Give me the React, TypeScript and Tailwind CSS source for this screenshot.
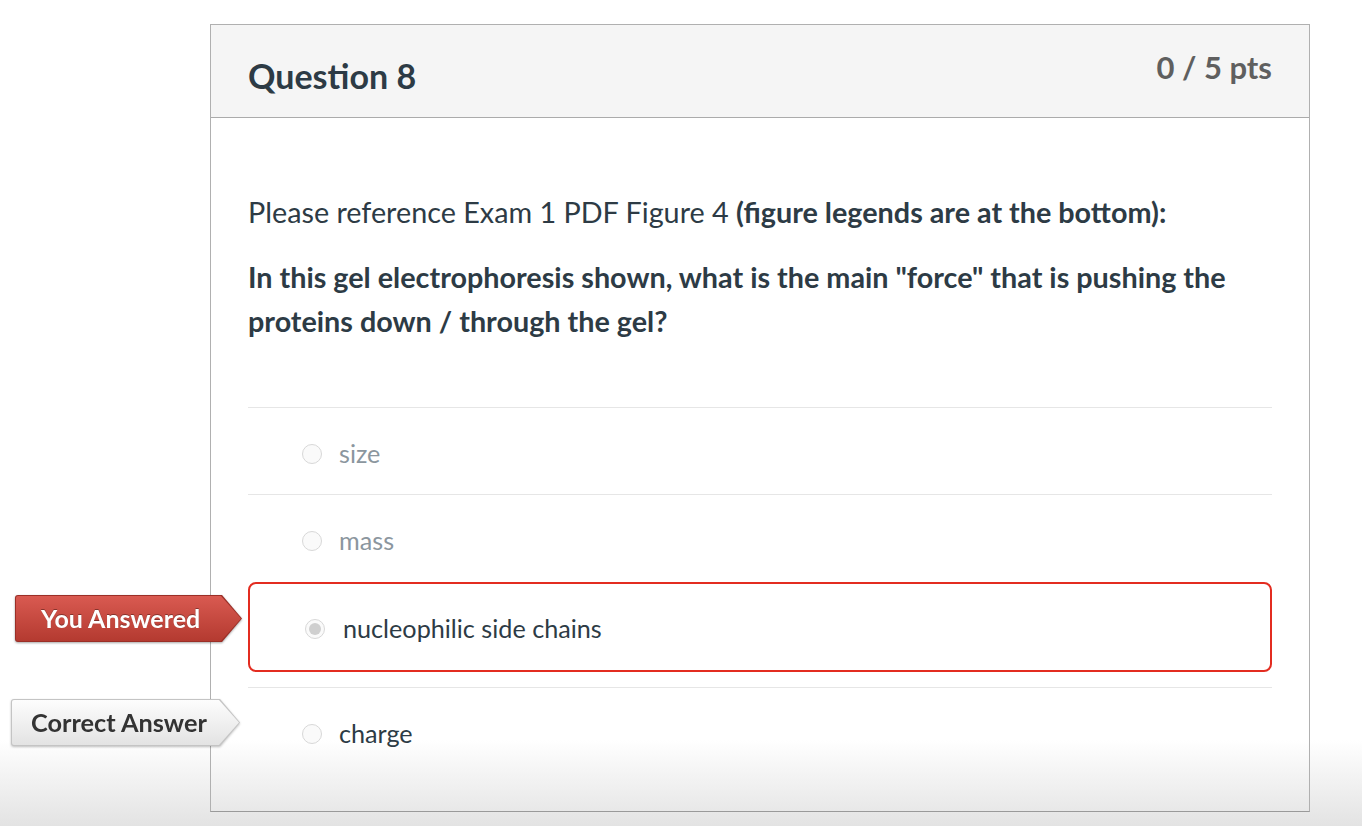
import type { ReactNode } from 'react';

const answers = [
  { id: 'a1', text: 'size' },
  { id: 'a2', text: 'mass' },
];

function Tag({ tone, children }: { tone: 'red' | 'gray'; children: ReactNode }) {
  const clip = '[clip-path:polygon(0_0,calc(100%-20px)_0,100%_50%,calc(100%-20px)_100%,0_100%)]';
  if (tone === 'red') {
    return (
      <div className="h-full w-full [filter:drop-shadow(0_1px_1px_rgba(0,0,0,0.35))]">
        <div className={`${clip} h-full w-full rounded-l-[3px] bg-[#9b2f27] p-px`}>
          <div className={`${clip} flex h-full w-full items-center rounded-l-[2px] bg-[linear-gradient(to_bottom,#d95a51,#b43a30)] pl-[25px] text-[25px] font-bold text-white [text-shadow:0_-1px_0_rgba(0,0,0,0.35)]`}>
            {children}
          </div>
        </div>
      </div>
    );
  }
  return (
    <div className="h-full w-full [filter:drop-shadow(0_1px_1px_rgba(0,0,0,0.25))]">
      <div className={`${clip} h-full w-full rounded-l-[3px] bg-[#c4c4c4] p-px`}>
        <div className={`${clip} flex h-full w-full items-center rounded-l-[2px] bg-[linear-gradient(to_bottom,#fdfdfd,#e3e3e3)] pl-[19px] text-[25.3px] font-bold text-[#333333]`}>
          {children}
        </div>
      </div>
    </div>
  );
}

function Radio({ checked }: { checked?: boolean }) {
  return (
    <span className="flex h-[20px] w-[20px] shrink-0 items-center justify-center rounded-full border border-[#d8d8d8] bg-[#fafafa]">
      {checked && <span className="h-[12px] w-[12px] rounded-full bg-[#cfcfcf]" />}
    </span>
  );
}

export default function App() {
  return (
    <div className="relative h-[826px] w-full overflow-hidden bg-[linear-gradient(to_bottom,#ffffff_0px,#ffffff_740px,#e3e3e3_826px)] font-['Lato','Open_Sans',sans-serif] text-[#2d3b45]">
      <div className="ml-[210px] mt-[24px] flex h-[788px] w-[1100px] flex-col border border-[#b0b0b0] border-b-[#9a9a9a]">
        {/* header */}
        <div className="flex h-[93px] items-start justify-between border-b border-[#ababab] bg-[#f5f5f5] px-[37px]">
          <h2 className="pt-[31px] text-[34px] font-bold leading-[40px]">Question 8</h2>
          <div className="pt-[24px] text-[31px] font-bold leading-[36px] text-[#5f5f5f]">0 / 5 pts</div>
        </div>

        {/* body */}
        <div className="px-[37px] pt-[72px]">
          <p className="text-[28.75px] leading-[44px]">
            Please reference Exam 1 PDF Figure 4 <strong className="font-bold">(figure legends are at the bottom):</strong>
          </p>
          <p className="mt-[21px] text-[28.75px] font-bold leading-[44px]">
            In this gel electrophoresis shown, what is the main "force" that is pushing the proteins down / through the gel?
          </p>

          <div className="mt-[64px]">
            {answers.map(a => (
              <div key={a.id} className="flex h-[87px] items-center gap-[17px] border-t border-[#e6e6e6] pl-[54px] pt-[6px]">
                <Radio />
                <span className="text-[25.2px] text-[#8b969e]">{a.text}</span>
              </div>
            ))}

            {/* you answered */}
            <div className="relative mt-px flex h-[90px] items-center gap-[18px] rounded-[8px] border-2 border-[#e32c20] pl-[55px] pt-[4px]">
              <div className="absolute left-[-235px] top-[11px] h-[47px] w-[227px]">
                <Tag tone="red">You Answered</Tag>
              </div>
              <Radio checked />
              <span className="text-[25.2px] text-[#2d3b45]">nucleophilic side chains</span>
            </div>

            {/* correct answer */}
            <div className="relative mt-[15px] flex h-[87px] items-center gap-[17px] border-t border-[#e6e6e6] pl-[54px] pt-[6px]">
              <div className="absolute left-[-237px] top-[11px] h-[47px] w-[229px]">
                <Tag tone="gray">Correct Answer</Tag>
              </div>
              <Radio />
              <span className="text-[25.2px] text-[#2d3b45]">charge</span>
            </div>
          </div>
        </div>
      </div>
    </div>
  );
}
